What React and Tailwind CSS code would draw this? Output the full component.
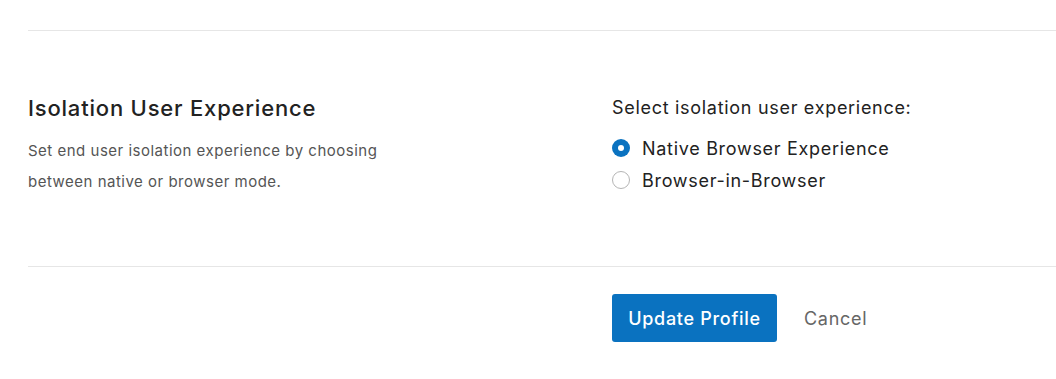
import React, { useState } from "react";

function Radio({ checked, label, onChange }) {
  return (
    <label className="flex items-center gap-[12px] cursor-pointer h-[32px]">
      <span
        className={
          checked
            ? "w-[18px] h-[18px] rounded-full bg-[#0a72c0] flex items-center justify-center"
            : "w-[18px] h-[18px] rounded-full border border-[#b5b5b5] bg-white"
        }
        onClick={onChange}
      >
        {checked && <span className="w-[6px] h-[6px] rounded-full bg-white"></span>}
      </span>
      <span className="text-[18px] text-[#222] tracking-[0.7px]">{label}</span>
    </label>
  );
}

export default function App() {
  const [mode, setMode] = useState("native");

  return (
    <div className="bg-white w-[1056px] h-[379px] overflow-hidden font-['Inter',sans-serif]">
      <div className="pl-[28px] pt-[30px]">
        <div className="border-t border-[#e6e6e6]"></div>
        <div className="flex pt-[62px] h-[235px]">
          <div className="w-[584px]">
            <p className="text-[22px] text-[#222] font-medium leading-[30px] tracking-[0.8px]">
              Isolation User Experience
            </p>
            <p className="text-[15px] text-[#555] leading-[31px] mt-[12px] w-[380px] tracking-[0.5px]">
              Set end user isolation experience by choosing between native or browser mode.
            </p>
          </div>
          <div>
            <p className="text-[18px] text-[#222] leading-[30px] tracking-[0.7px]">Select isolation user experience:</p>
            <div className="mt-[9px] flex flex-col">
              <Radio
                checked={mode === "native"}
                label="Native Browser Experience"
                onChange={() => setMode("native")}
              />
              <Radio
                checked={mode === "bib"}
                label="Browser-in-Browser"
                onChange={() => setMode("bib")}
              />
            </div>
          </div>
        </div>
        <div className="border-t border-[#e6e6e6]"></div>
        <div className="flex items-center pl-[584px] pt-[27px] gap-[27px]">
          <button className="w-[165px] h-[48px] rounded-[3px] bg-[#0a72c0] text-white text-[18px] font-medium tracking-[0.7px]">
            Update Profile
          </button>
          <button className="text-[18px] text-[#666] tracking-[0.7px]">Cancel</button>
        </div>
      </div>
    </div>
  );
}
